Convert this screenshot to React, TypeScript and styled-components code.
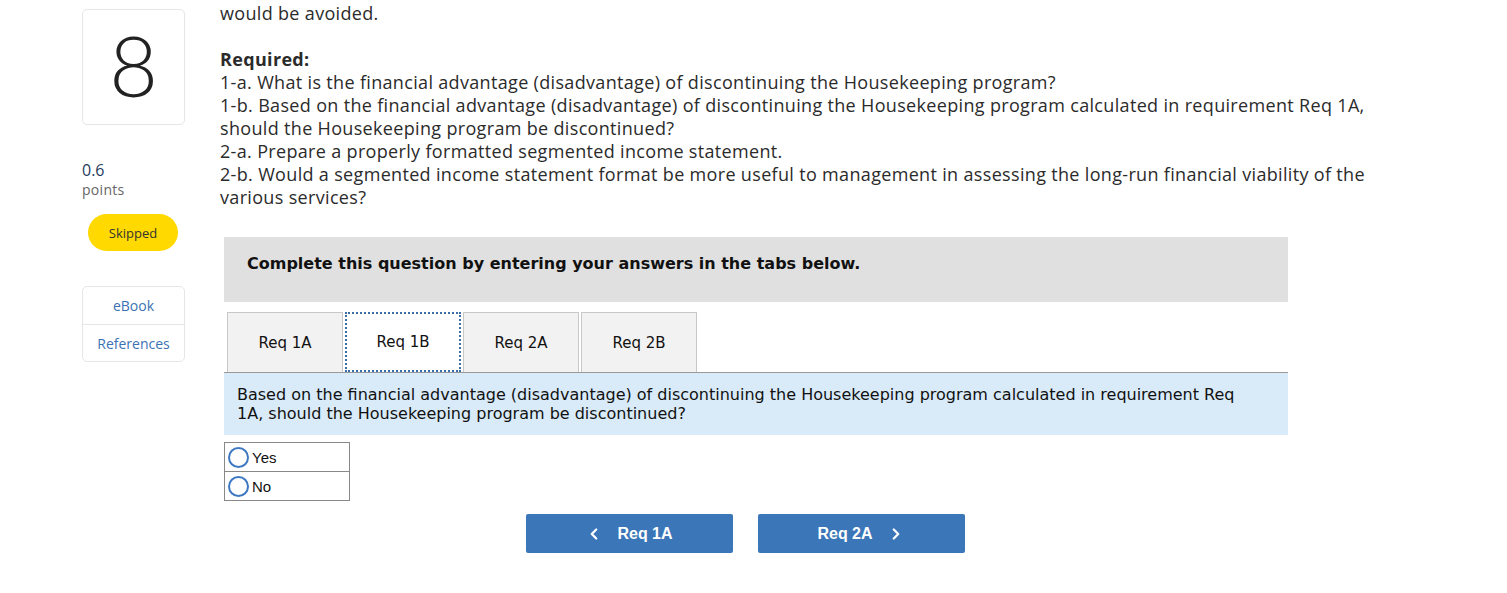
import styled, { createGlobalStyle } from "styled-components";
import { ChevronLeft, ChevronRight } from "lucide-react";

const GlobalStyle = createGlobalStyle`
    body {
        margin: 0;
        background: #fff;
        font-family: "Open Sans", "Lato", sans-serif;
        color: #2b2b2b;
    }
`;

const Page = styled.div`
    display: flex;
    align-items: flex-start;
    gap: 35px;
    padding-left: 82px;
    width: 1507px;
    height: 593px;
    box-sizing: border-box;
    overflow: hidden;
`;

const Side = styled.div`
    width: 103px;
    display: flex;
    flex-direction: column;
    padding-top: 9px;
`;

const NumberBox = styled.div`
    height: 116px;
    border: 1px solid #e6e6e6;
    border-radius: 5px;
    box-sizing: border-box;
    display: flex;
    align-items: center;
    justify-content: center;
    font-family: "Lato", sans-serif;
    font-weight: 300;
    font-size: 84px;
    color: #222;
    padding-bottom: 6px;
`;

const Score = styled.div`
    margin-top: 35px;
    font-size: 16px;
    line-height: 20px;
    color: #1f3b5e;
`;

const ScoreLabel = styled.div`
    font-size: 14px;
    line-height: 20px;
    letter-spacing: 0.3px;
    color: #666;
`;

const Pill = styled.div`
    margin: 14px 0 0 6px;
    width: 90px;
    height: 37px;
    border-radius: 19px;
    background: #ffd900;
    display: flex;
    align-items: center;
    justify-content: center;
    font-size: 13px;
    color: #333;
`;

const Links = styled.div`
    margin-top: 35px;
    border: 1px solid #e6e6e6;
    border-radius: 5px;
    display: flex;
    flex-direction: column;
`;

const LinkRow = styled.div<{ $first?: boolean }>`
    height: ${(p) => (p.$first ? 37 : 36)}px;
    display: flex;
    align-items: center;
    justify-content: center;
    font-size: 14px;
    color: #3b72b5;
    border-top: ${(p) => (p.$first ? "none" : "1px solid #e6e6e6")};
`;

const Main = styled.div`
    width: 1152px;
    padding-top: 2px;
`;

const Prose = styled.p`
    margin: 0;
    font-size: 18px;
    line-height: 23px;
    letter-spacing: 0.33px;
    color: #2b2b2b;
`;

const Required = styled(Prose)`
    margin-top: 23px;
`;

const Work = styled.div`
    margin: 28px 0 0 4px;
    width: 1064px;
    font-family: "DejaVu Sans", Verdana, sans-serif;
`;

const Instruction = styled.div`
    height: 65px;
    box-sizing: border-box;
    background: #e0e0e0;
    padding: 17px 0 0 23px;
    font-weight: bold;
    font-size: 16px;
    line-height: 20px;
    color: #111;
`;

const Tabs = styled.div`
    margin-top: 10px;
    display: flex;
    gap: 2px;
    padding-left: 3px;
`;

const Tab = styled.div<{ $active?: boolean }>`
    width: 116px;
    height: 60px;
    box-sizing: border-box;
    display: flex;
    align-items: center;
    justify-content: center;
    font-size: 15px;
    color: #111;
    background: ${(p) => (p.$active ? "#fff" : "#f2f2f2")};
    border: ${(p) => (p.$active ? "2px dotted #3a6ea8" : "1px solid #c8c8c8")};
    border-bottom: ${(p) => (p.$active ? "2px dotted #3a6ea8" : "none")};
    margin-bottom: ${(p) => (p.$active ? "-1px" : "0")};
    position: relative;
    z-index: ${(p) => (p.$active ? 1 : 0)};
`;

const Panel = styled.div`
    background: #d9ebf9;
    border-top: 1px solid #999;
    height: 63px;
    box-sizing: border-box;
    padding: 12px 30px 0 13px;
    font-size: 16px;
    line-height: 19px;
    color: #111;
`;

const Choices = styled.div`
    margin-top: 7px;
    width: 126px;
    border: 1px solid #888;
    box-sizing: border-box;
    font-family: "Liberation Sans", Arial, sans-serif;
`;

const Choice = styled.div<{ $first?: boolean }>`
    height: 28px;
    display: flex;
    align-items: center;
    gap: 3px;
    padding-left: 3px;
    font-size: 15px;
    color: #111;
    border-top: ${(p) => (p.$first ? "none" : "1px solid #888")};
`;

const Radio = styled.span`
    width: 21px;
    height: 21px;
    box-sizing: border-box;
    border-radius: 50%;
    border: 2.5px solid #3d78c0;
    background: #fff;
`;

const Nav = styled.div`
    margin-top: 13px;
    display: flex;
    justify-content: center;
    gap: 25px;
    padding-right: 22px;
`;

const NavButton = styled.div`
    width: 207px;
    height: 39px;
    border-radius: 2px;
    background: #3a76b8;
    color: #fff;
    display: flex;
    align-items: center;
    justify-content: center;
    gap: 14px;
    font-family: "Liberation Sans", Arial, sans-serif;
    font-weight: bold;
    font-size: 16px;
`;

export default function App() {
    return (
        <>
            <GlobalStyle />
            <Page>
                <Side>
                    <NumberBox>8</NumberBox>
                    <Score>0.6</Score>
                    <ScoreLabel>points</ScoreLabel>
                    <Pill>Skipped</Pill>
                    <Links>
                        <LinkRow $first>eBook</LinkRow>
                        <LinkRow>References</LinkRow>
                    </Links>
                </Side>
                <Main>
                    <Prose>would be avoided.</Prose>
                    <Required>
                        <strong>Required:</strong>
                        <br />
                        1-a. What is the financial advantage (disadvantage) of discontinuing the Housekeeping program?
                        <br />
                        1-b. Based on the financial advantage (disadvantage) of discontinuing the Housekeeping program calculated in requirement Req 1A, should the Housekeeping program be discontinued?
                        <br />
                        2-a. Prepare a properly formatted segmented income statement.
                        <br />
                        2-b. Would a segmented income statement format be more useful to management in assessing the long-run financial viability of the various services?
                    </Required>
                    <Work>
                        <Instruction>Complete this question by entering your answers in the tabs below.</Instruction>
                        <Tabs>
                            <Tab>Req 1A</Tab>
                            <Tab $active>Req 1B</Tab>
                            <Tab>Req 2A</Tab>
                            <Tab>Req 2B</Tab>
                        </Tabs>
                        <Panel>
                            Based on the financial advantage (disadvantage) of discontinuing the Housekeeping program calculated in requirement Req 1A, should the Housekeeping program be discontinued?
                        </Panel>
                        <Choices>
                            <Choice $first>
                                <Radio />
                                Yes
                            </Choice>
                            <Choice>
                                <Radio />
                                No
                            </Choice>
                        </Choices>
                        <Nav>
                            <NavButton>
                                <ChevronLeft size={18} strokeWidth={3} />
                                Req 1A
                            </NavButton>
                            <NavButton>
                                Req 2A
                                <ChevronRight size={18} strokeWidth={3} />
                            </NavButton>
                        </Nav>
                    </Work>
                </Main>
            </Page>
        </>
    );
}
